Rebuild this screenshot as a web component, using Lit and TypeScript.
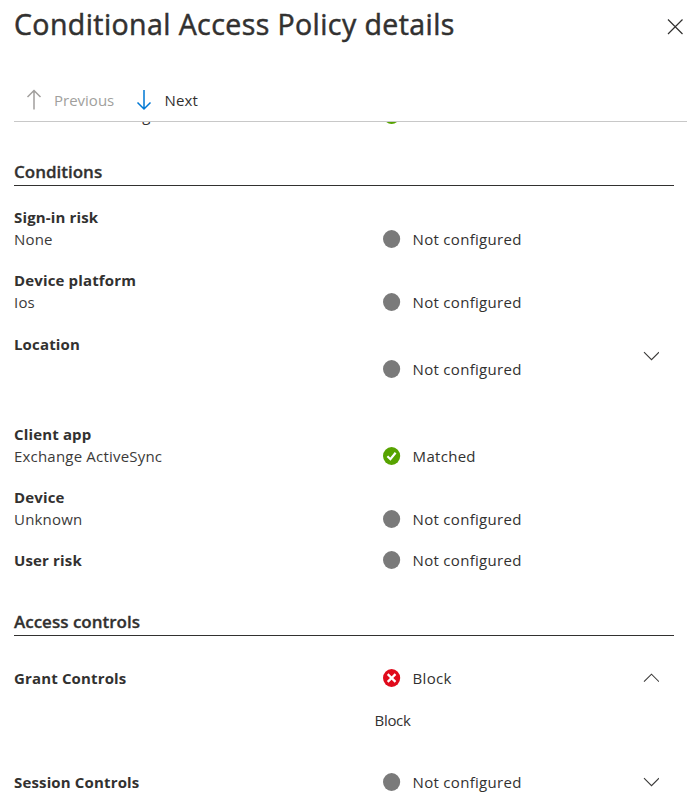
import { LitElement, html, svg, css, nothing } from "lit";
import { customElement, property } from "lit/decorators.js";

type Status = "none" | "matched" | "blocked";

interface PolicyRow {
  kind: string;
  label: string;
  value?: string;
  status: Status;
  text: string;
  chevron?: "up" | "down";
  detail?: string;
}

const CONDITIONS: PolicyRow[] = [
  { kind: "pair", label: "Sign-in risk", value: "None", status: "none", text: "Not configured" },
  { kind: "pair", label: "Device platform", value: "Ios", status: "none", text: "Not configured" },
  { kind: "location", label: "Location", status: "none", text: "Not configured", chevron: "down" },
  { kind: "pair", label: "Client app", value: "Exchange ActiveSync", status: "matched", text: "Matched" },
  { kind: "pair", label: "Device", value: "Unknown", status: "none", text: "Not configured" },
  { kind: "single", label: "User risk", status: "none", text: "Not configured" },
];

const CONTROLS: PolicyRow[] = [
  { kind: "control", label: "Grant Controls", status: "blocked", text: "Block", chevron: "up", detail: "Block" },
  { kind: "control", label: "Session Controls", status: "none", text: "Not configured", chevron: "down" },
];

@customElement("status-badge")
class StatusBadge extends LitElement {
  static styles = css`
    :host { display: flex; align-items: center; height: 22px; }
    svg { display: block; flex: none; width: 18px; height: 18px; margin-right: 12px; }
    .none { fill: #7a7a7a; }
    .matched { fill: #57a300; }
    .blocked { fill: #e00b1c; }
    .mark { fill: none; stroke: #fff; stroke-width: 2.2; }
    .text { white-space: nowrap; letter-spacing: 0.3px; }
  `;
  @property() status: Status = "none";
  @property() text = "";

  render() {
    return html`
      <svg viewBox="0 0 18 18">
        <ellipse class=${this.status} cx="8.6" cy="9" rx="8.6" ry="8.9"></ellipse>
        ${this.status === "matched" ? svg`<path class="mark" d="M4.4 9.2 7.4 12.2 12.6 5.8"></path>` : nothing}
        ${this.status === "blocked" ? svg`<path class="mark" d="M4.7 5.1 12.5 12.9M12.5 5.1 4.7 12.9"></path>` : nothing}
      </svg>
      <span class="text">${this.text}</span>
    `;
  }
}

@customElement("policy-row")
class PolicyRowElement extends LitElement {
  static styles = css`
    :host { display: block; }
    .row { display: grid; grid-template-columns: 368.6px 260.4px 1fr; line-height: 22px; }
    .pair { height: 63px; }
    .location { height: 91px; padding-top: 1px; box-sizing: border-box; }
    .single { height: 22px; }
    .control { min-height: 22px; }
    .label { font-weight: 700; letter-spacing: 0.15px; white-space: nowrap; }
    .value { letter-spacing: 0.2px; white-space: nowrap; color: #3b3a39; }
    .pair status-badge { margin-top: 22px; }
    .location status-badge { margin-top: 25px; }
    .chevron { display: block; width: 16px; height: 10px; margin-top: 6px; fill: none; stroke: #3b3a39; stroke-width: 1.1; }
    .location .chevron { margin-top: 18px; }
    .detail { height: 22px; margin: 20px 0 40px 360.5px; line-height: 22px; letter-spacing: -0.3px; }
  `;
  @property({ attribute: false }) row!: PolicyRow;

  render() {
    const r = this.row;
    return html`
      <div class="row ${r.kind}">
        <div>
          <div class="label">${r.label}</div>
          ${r.value ? html`<div class="value">${r.value}</div>` : nothing}
        </div>
        <status-badge .status=${r.status} .text=${r.text}></status-badge>
        ${r.chevron
          ? html`<svg class="chevron" viewBox="0 0 16 10">
              <path d=${r.chevron === "down" ? "M1 1.2 8.5 8.7 16 1.2" : "M1 8.7 8.5 1.2 16 8.7"}></path>
            </svg>`
          : nothing}
      </div>
      ${r.detail ? html`<div class="detail">${r.detail}</div>` : nothing}
    `;
  }
}

@customElement("app-root")
class AppRoot extends LitElement {
  static styles = css`
    :host {
      display: flex; flex-direction: column; box-sizing: border-box;
      width: 690px; height: 803px; overflow: hidden; background: #fff; color: #323130;
      font: 400 15px/22px "Segoe UI", "Open Sans", "Noto Sans", sans-serif;
    }
    header { display: flex; justify-content: space-between; height: 50px; padding: 0 7px 0 14px; flex: none; }
    h1 { margin: 0; font-size: 28.5px; font-weight: 400; line-height: 48px; letter-spacing: 0.42px; white-space: nowrap; -webkit-text-stroke: 0.5px #323130; }
    .close { width: 16px; height: 16px; margin-top: 19px; fill: none; stroke: #323130; stroke-width: 1.2; }
    nav { display: flex; align-items: center; height: 42px; margin: 29px 3px 0 14px; padding-left: 12px; border-bottom: 1px solid #c8c8c8; box-sizing: content-box; flex: none; }
    .command { display: flex; align-items: center; }
    .command svg { width: 16px; height: 22px; margin-right: 12px; fill: none; stroke: currentColor; stroke-width: 1.5; }
    .previous { width: 110px; color: #a19f9d; }
    .next svg { color: #0078d4; }
    .next span { margin-left: 0.5px; letter-spacing: 0.15px; }
    main { flex: 1; min-height: 0; overflow: hidden; padding: 0 16px 0 14px; }
    .scrolled { display: grid; grid-template-columns: 368.6px 1fr; height: 22px; margin-top: -18px; letter-spacing: 0.2px; }
    h2 { margin: 0; height: 26px; font-size: 17px; font-weight: 600; line-height: 26px; border-bottom: 1px solid #323130; letter-spacing: 0; -webkit-text-stroke: 0.3px #323130; }
    .conditions { margin: 33px 0 20px; }
    .controls { margin: 38px 0 31px; }
  `;

  render() {
    return html`
      <header>
        <h1>Conditional Access Policy details</h1>
        <svg class="close" viewBox="0 0 16 16"><path d="M1 0.5 15.5 15M15.5 0.5 1 15"></path></svg>
      </header>
      <nav>
        <div class="command previous">
          <svg viewBox="0 0 16 22"><path d="M8 20.5V1.5M1.5 8 8 1.5 14.5 8"></path></svg>
          <span>Previous</span>
        </div>
        <div class="command next">
          <svg viewBox="0 0 16 22"><path d="M8 1V20M1.5 13.5 8 20 14.5 13.5"></path></svg>
          <span>Next</span>
        </div>
      </nav>
      <main>
        <div class="scrolled">
          <span>Office 365 Exchange Online</span>
          <status-badge status="matched" text="Matched"></status-badge>
        </div>
        <h2 class="conditions">Conditions</h2>
        ${CONDITIONS.map((row) => html`<policy-row .row=${row}></policy-row>`)}
        <h2 class="controls">Access controls</h2>
        ${CONTROLS.map((row) => html`<policy-row .row=${row}></policy-row>`)}
      </main>
    `;
  }
}
